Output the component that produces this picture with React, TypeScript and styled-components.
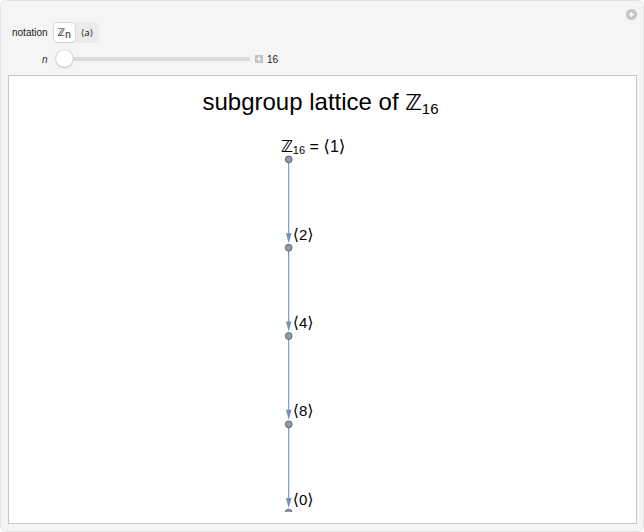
import React from "react";
import styled, { createGlobalStyle } from "styled-components";

const Global = createGlobalStyle`
  html, body { margin: 0; padding: 0; background: #ffffff; }
  body { font-family: "Liberation Sans", Arial, "DejaVu Sans", sans-serif; }
  * { box-sizing: border-box; }
`;

const Panel = styled.div`
  position: relative;
  width: 644px;
  height: 532px;
  background: #f5f5f5;
  border: 1px solid #e3e3e3;
  border-radius: 6px;
  display: flex;
  flex-direction: column;
  padding: 21px 7px 7px 7px;
`;

const CornerButton = styled.div`
  position: absolute;
  top: 8px;
  right: 6px;
  width: 11px;
  height: 11px;
  border-radius: 50%;
  background: #c4c4c4;
  display: flex;
  align-items: center;
  justify-content: center;
`;

const ControlRow = styled.div`
  display: flex;
  align-items: center;
  height: 21px;
  flex: none;
`;

const Label = styled.span`
  font-size: 10px;
  color: #1a1a1a;
  margin-left: 4px;
  margin-right: 5px;
`;

const ToggleGroup = styled.div`
  display: flex;
  align-items: center;
  background: #ebebeb;
  border-radius: 5px;
  padding: 1px;
  gap: 1px;
  height: 21px;
`;

const Toggle = styled.div<{ $active?: boolean }>`
  height: 19px;
  padding: 0 ${(p) => (p.$active ? 4 : 5)}px;
  display: flex;
  align-items: center;
  border-radius: 4px;
  font-size: 9px;
  color: #222;
  background: ${(p) => (p.$active ? "#ffffff" : "transparent")};
  box-shadow: ${(p) => (p.$active ? "0 0 0 0.5px #c9c9c9, 0 1px 1px rgba(0,0,0,0.08)" : "none")};
  font-family: "DejaVu Sans", "Liberation Sans", sans-serif;
`;

const BigZ = styled.span`
  font-size: 10px;
  font-weight: bold;
`;

const SubN = styled.span`
  font-size: 10px;
  font-family: "Liberation Sans", sans-serif;
  position: relative;
  top: 2px;
`;

const SliderRow = styled.div`
  display: flex;
  align-items: center;
  height: 18px;
  margin-top: 7px;
  padding-left: 34px;
  flex: none;
`;

const VarName = styled.span`
  font-size: 10px;
  font-style: italic;
  color: #333;
  width: 14px;
`;

const Track = styled.div`
  position: relative;
  width: 194px;
  height: 4px;
  border-radius: 2px;
  background: #dadada;
`;

const Thumb = styled.div`
  position: absolute;
  left: 0px;
  top: -7px;
  width: 17px;
  height: 17px;
  border-radius: 50%;
  background: #ffffff;
  box-shadow: 0 0 0 0.5px #bdbdbd, 0 1px 2px rgba(0, 0, 0, 0.2);
`;

const PlusBox = styled.div`
  width: 8px;
  height: 8px;
  margin-left: 5px;
  background: #c2c2c2;
  display: flex;
  align-items: center;
  justify-content: center;
`;

const Value = styled.span`
  font-size: 10px;
  color: #222;
  margin-left: 4px;
`;

const Content = styled.div`
  margin-top: 7px;
  width: 629px;
  height: 449px;
  flex: none;
  background: #ffffff;
  border: 1px solid #c8c8c8;
  display: flex;
  flex-direction: column;
  align-items: center;
  overflow: hidden;
`;

const Title = styled.div`
  font-size: 24px;
  line-height: 28px;
  margin-top: 12px;
  color: #000;
  margin-left: -4px;
`;

const TitleZ = styled.span`
  font-family: "DejaVu Sans", sans-serif;
  font-weight: bold;
  font-size: 22px;
`;

const TitleSub = styled.span`
  font-size: 15px;
  position: relative;
  top: 4px;
`;

const Graph = styled.svg`
  display: block;
  margin-top: 12px;
  flex: none;
`;

const EDGE = "#7091c0";
const NODE_FILL = "#8c9cb8";
const NODE_STROKE = "#4f4f4f";

const nodeX = 279.7;
const nodeYs = [28.4, 116.7, 205, 293.3, 381.6];
const labels = ["2", "4", "8", "0"];

const BR = "'DejaVu Sans', sans-serif";
const TX = "'Liberation Sans', Arial, sans-serif";

function Lattice() {
  return (
    <Graph width={627} height={381} viewBox="0 0 627 381">
      {nodeYs.slice(0, -1).map((y, i) => {
        const y2 = nodeYs[i + 1];
        const tip = y2 - 4.5;
        return (
          <g key={"e" + i}>
            <line x1={nodeX} y1={y} x2={nodeX} y2={tip - 8} stroke={EDGE} strokeWidth={1.1} />
            <polygon
              points={`${nodeX - 2.8},${tip - 10} ${nodeX + 2.8},${tip - 10} ${nodeX},${tip}`}
              fill={EDGE}
            />
          </g>
        );
      })}
      {nodeYs.map((y, i) => (
        <circle key={"n" + i} cx={nodeX} cy={y} r={3.4} fill={NODE_FILL} stroke={NODE_STROKE} strokeWidth={0.8} />
      ))}
      <text x={nodeX - 8} y={21} fontFamily={TX} fontSize={16} fill="#000">
        <tspan fontFamily={BR} fontWeight="bold" fontSize={16}>ℤ</tspan>
        <tspan fontSize={11} dy={2}>16</tspan>
        <tspan dy={-2}> = </tspan>
        <tspan fontFamily={BR} fontSize={17}>⟨</tspan>
        <tspan>1</tspan>
        <tspan fontFamily={BR} fontSize={17}>⟩</tspan>
      </text>
      {labels.map((t, i) => (
        <text key={"l" + i} x={nodeX + 4} y={nodeYs[i + 1] - 8} fontFamily={TX} fontSize={15} fill="#000">
          <tspan fontFamily={BR} fontSize={16}>⟨</tspan>
          <tspan>{t}</tspan>
          <tspan fontFamily={BR} fontSize={16}>⟩</tspan>
        </text>
      ))}
    </Graph>
  );
}

export default function App() {
  return (
    <>
      <Global />
      <Panel>
        <CornerButton>
          <svg width="7" height="7" viewBox="0 0 7 7">
            <path d="M3.5 1v5M1 3.5h5" stroke="#fff" strokeWidth="1.4" />
          </svg>
        </CornerButton>
        <ControlRow>
          <Label>notation</Label>
          <ToggleGroup>
            <Toggle $active>
              <BigZ>ℤ</BigZ>
              <SubN>n</SubN>
            </Toggle>
            <Toggle>
              ⟨<i>a</i>⟩
            </Toggle>
          </ToggleGroup>
        </ControlRow>
        <SliderRow>
          <VarName>n</VarName>
          <Track>
            <Thumb />
          </Track>
          <PlusBox>
            <svg width="6" height="6" viewBox="0 0 6 6">
              <path d="M3 0.5v5M0.5 3h5" stroke="#fff" strokeWidth="1.2" />
            </svg>
          </PlusBox>
          <Value>16</Value>
        </SliderRow>
        <Content>
          <Title>
            subgroup lattice of <TitleZ>ℤ</TitleZ>
            <TitleSub>16</TitleSub>
          </Title>
          <Lattice />
        </Content>
      </Panel>
    </>
  );
}
